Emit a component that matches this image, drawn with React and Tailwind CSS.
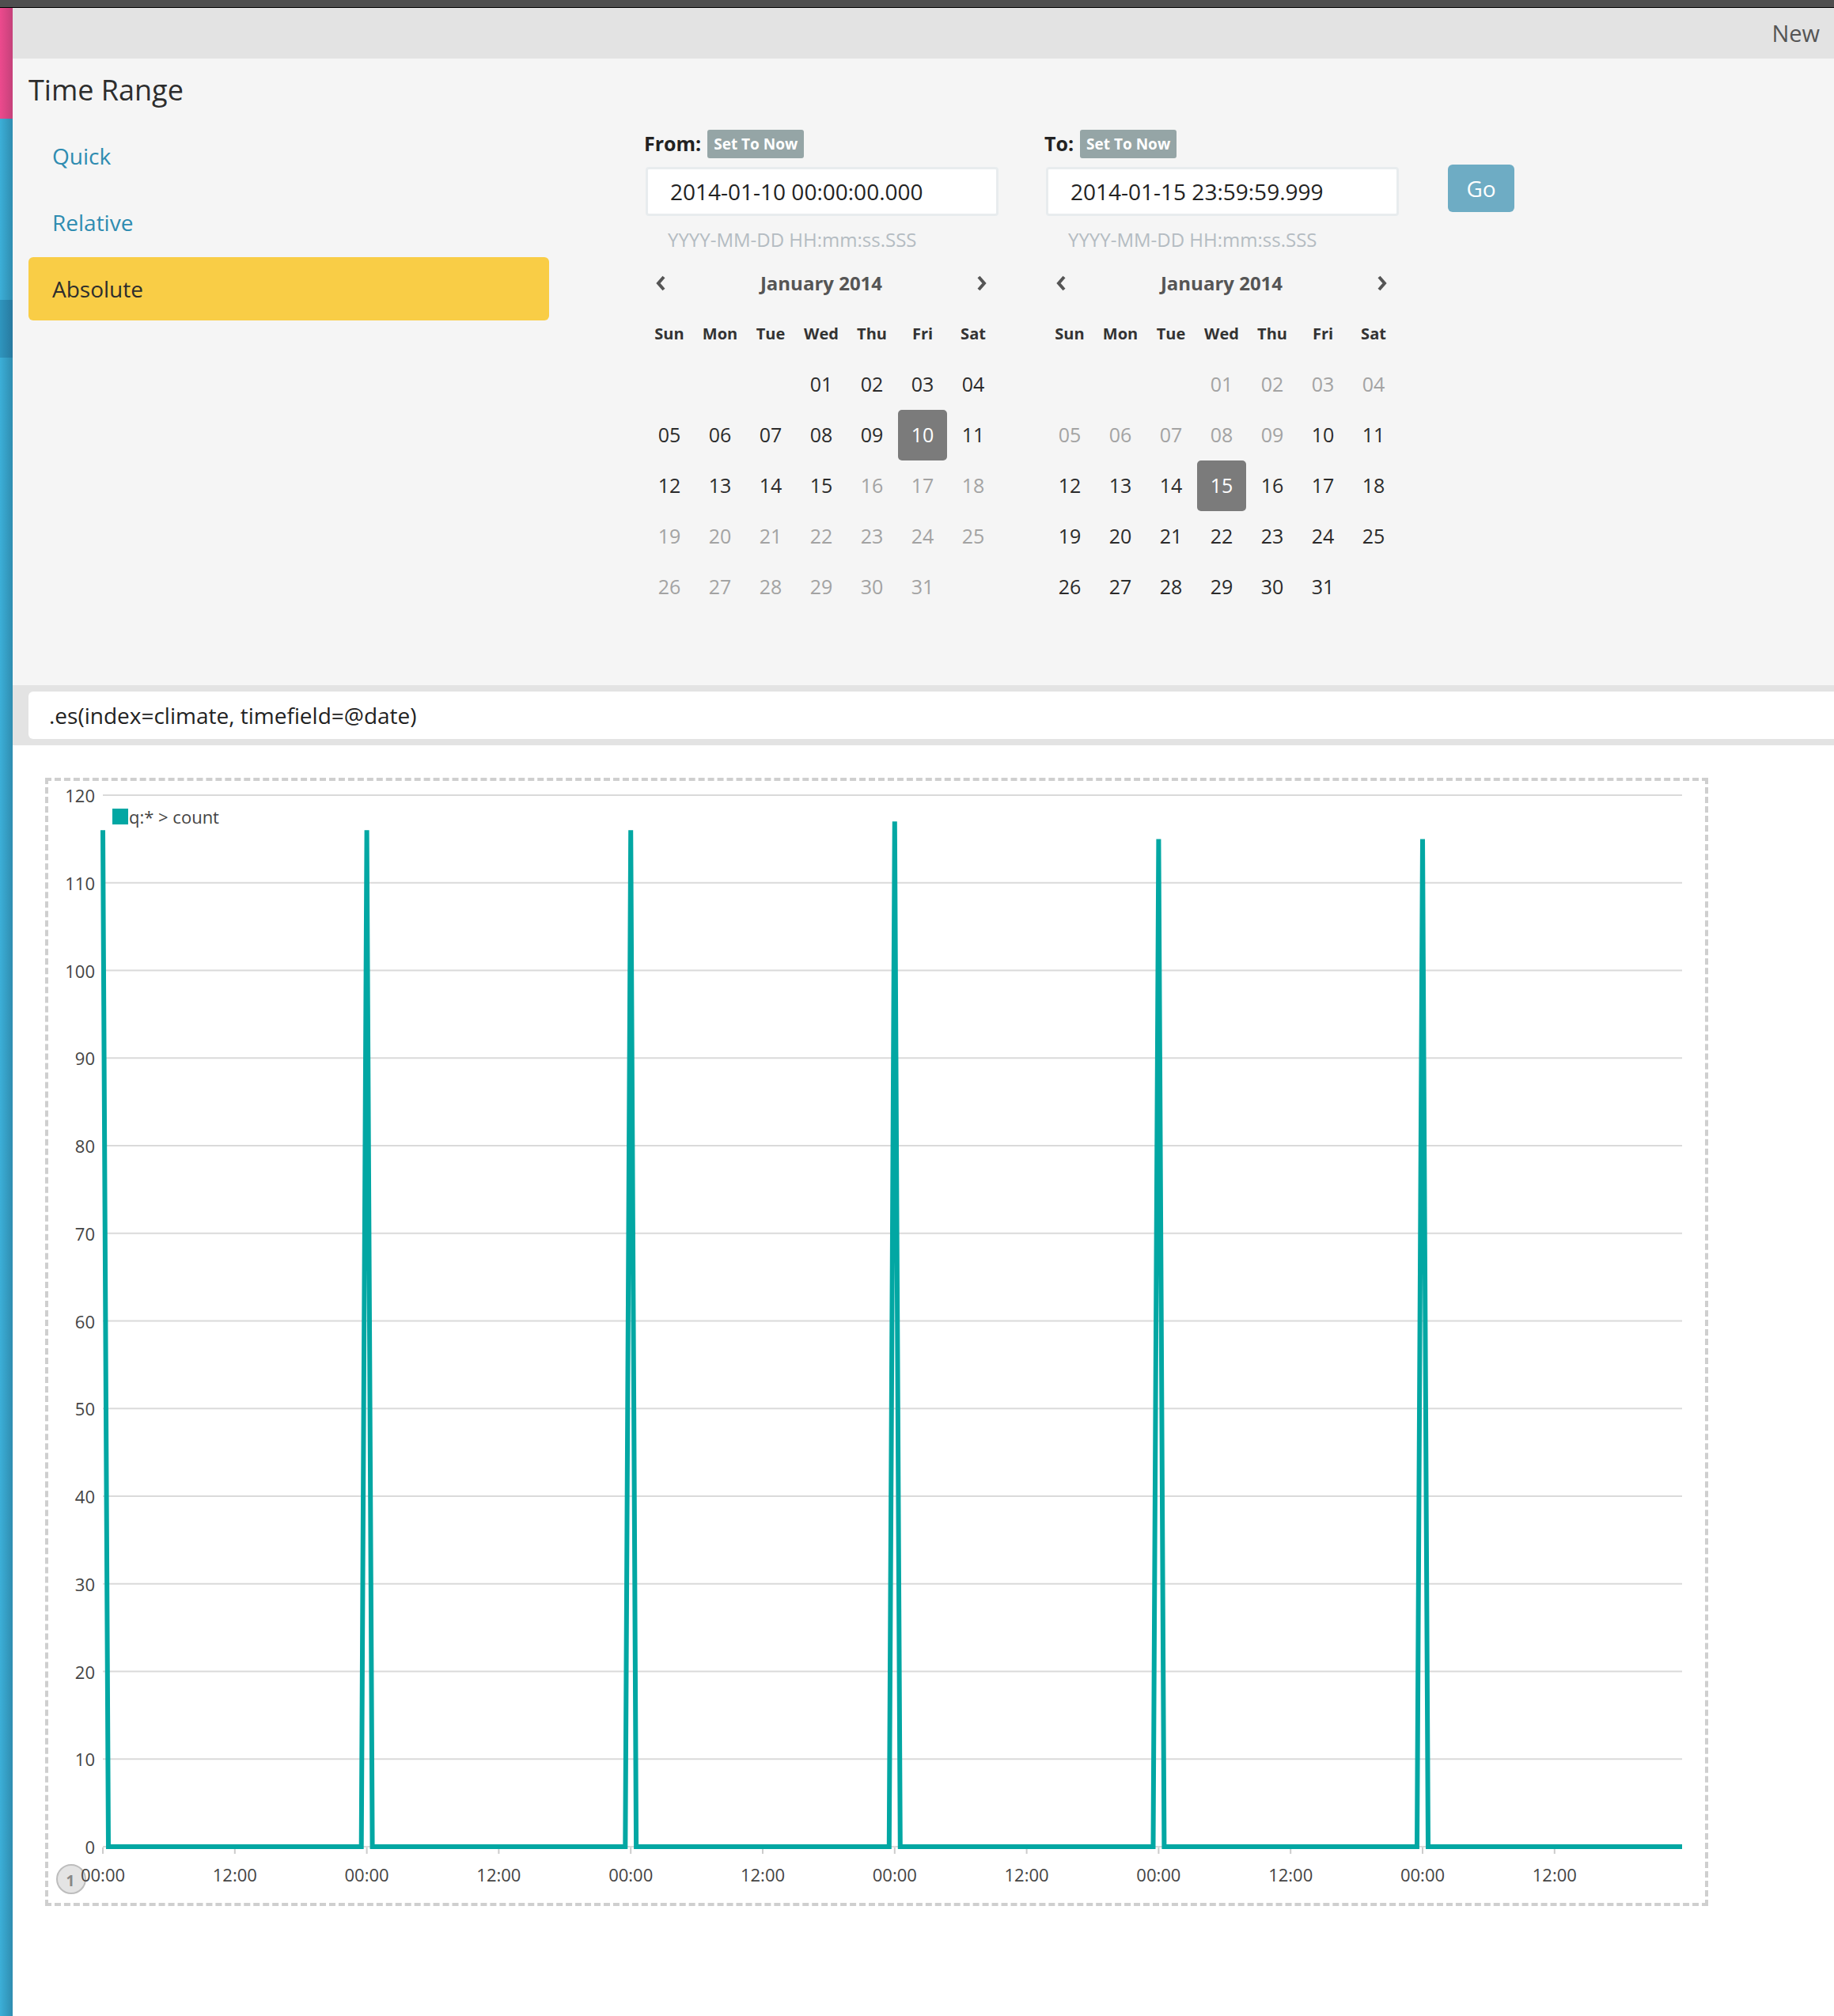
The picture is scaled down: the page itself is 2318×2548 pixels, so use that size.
import React from 'react';

const DAYS = ['Sun', 'Mon', 'Tue', 'Wed', 'Thu', 'Fri', 'Sat'];

// January 2014 starts on a Wednesday
const monthCells = () => {
    const cells = [];
    for (let i = 0; i < 3; i++) cells.push(null);
    for (let d = 1; d <= 31; d++) cells.push(d);
    while (cells.length % 7 !== 0) cells.push(null);
    return cells;
};

const Chevron = ({ dir }) => (
    <svg width="14" height="22" viewBox="0 0 14 22">
        <polyline
            points={dir === 'left' ? '11,3 4,11 11,19' : '3,3 10,11 3,19'}
            fill="none"
            stroke="#555"
            strokeWidth="4"
            strokeLinejoin="miter"
        />
    </svg>
);

const Calendar = ({ selected, isMuted }) => (
    <div className="w-[448px]">
        <div className="h-[64px] flex items-center justify-between px-[14px]">
            <Chevron dir="left" />
            <span className="text-[24px] font-bold text-[#555]">January 2014</span>
            <Chevron dir="right" />
        </div>
        <div className="grid grid-cols-7">
            {DAYS.map((d) => (
                <div key={d} className="h-[64px] flex items-center justify-center text-[20px] font-bold text-[#333]">
                    {d}
                </div>
            ))}
            {monthCells().map((d, i) => (
                <div key={i} className="h-[64px] flex items-center justify-center">
                    {d && (
                        <span
                            className={`w-[62px] h-[64px] flex items-center justify-center rounded-[5px] text-[25px] ${d === selected
                                ? 'bg-[#7b7b7b] text-white'
                                : isMuted(d)
                                    ? 'text-[#a3a3a3]'
                                    : 'text-[#2b2b2b]'
                                }`}
                        >
                            {String(d).padStart(2, '0')}
                        </span>
                    )}
                </div>
            ))}
        </div>
    </div>
);

const DateColumn = ({ label, value, selected, isMuted }) => (
    <div className="w-[448px] pt-[7px]">
        <div className="h-[36px] flex items-center gap-[8px]">
            <span className="text-[25px] font-bold text-[#222]">{label}</span>
            <span className="h-[36px] px-[8px] flex items-center rounded-[3px] bg-[#95a5a6] text-white text-[19px] font-bold">
                Set To Now
            </span>
        </div>
        <div className="mt-[11px] ml-[2px] h-[62px] border-[3px] border-[#e8ecee] rounded-[4px] bg-white flex items-center pl-[28px] text-[28px] text-[#222]">
            {value}
        </div>
        <div className="mt-[7px] h-[46px] leading-[46px] pl-[30px] text-[24px] text-[#b4bcc2]">
            YYYY-MM-DD HH:mm:ss.SSS
        </div>
        <Calendar selected={selected} isMuted={isMuted} />
    </div>
);

const Chart = () => {
    const x0 = 69;
    const x1 = 2065;
    const pxH = 13.9;
    const y = (v) => 1347 - v * (1329 / 120);
    const X = (h) => x0 + h * pxH;
    const peaks = [116, 116, 116, 117, 115, 115];

    const pts = [[X(0), y(peaks[0])], [X(0.5), y(0)]];
    for (let d = 1; d < 6; d++) {
        pts.push([X(24 * d - 0.5), y(0)]);
        pts.push([X(24 * d), y(peaks[d])]);
        pts.push([X(24 * d + 0.5), y(0)]);
    }
    pts.push([x1, y(0)]);
    const path = pts.map((p, i) => `${i ? 'L' : 'M'}${p[0].toFixed(1)},${p[1].toFixed(1)}`).join(' ');

    const grid = [];
    for (let v = 0; v <= 120; v += 10) grid.push(v);
    const ticks = [];
    for (let k = 0; k < 12; k++) ticks.push(k);

    return (
        <svg width="2094" height="1418" viewBox="0 0 2094 1418" className="block">
            {grid.map((v) => (
                <g key={v}>
                    <line x1={x0} x2={x1} y1={y(v)} y2={y(v)} stroke="#dadada" strokeWidth="2" />
                    <text x="59" y={y(v)} textAnchor="end" dominantBaseline="central" fontSize="22" fill="#444">
                        {v}
                    </text>
                </g>
            ))}
            {ticks.map((k) => (
                <line key={k} x1={X(k * 12)} x2={X(k * 12)} y1="1348" y2="1356" stroke="#ccc" strokeWidth="2" />
            ))}
            <circle cx="29" cy="1388" r="18" fill="#e4e4e4" stroke="#bdbdbd" strokeWidth="2" />
            <text x="28" y="1390" textAnchor="middle" dominantBaseline="central" fontSize="19" fontWeight="bold" fill="#888">
                1
            </text>
            {ticks.map((k) => (
                <text key={k} x={X(k * 12)} y="1382" textAnchor="middle" dominantBaseline="central" fontSize="22" fill="#444">
                    {k % 2 === 0 ? '00:00' : '12:00'}
                </text>
            ))}
            <path d={path} fill="none" stroke="#02a7a3" strokeWidth="6" strokeLinejoin="miter" />
            <rect x="81" y="35" width="20" height="20" fill="#02a7a3" />
            <text x="102" y="45" dominantBaseline="central" fontSize="22" fill="#444">
                q:* &gt; count
            </text>
        </svg>
    );
};

const App = () => {
    return (
        <div className="min-h-[2548px] w-full flex flex-col bg-white font-['Open_Sans',sans-serif]">
            <div className="h-[10px] bg-[#4f4f4f] border-b border-black" />
            <div className="flex flex-1">
                <aside className="w-[16px] flex flex-col shrink-0">
                    <div className="h-[140px] bg-gradient-to-r from-[#ec4a8d] to-[#c5417a]" />
                    <div className="h-[229px] bg-gradient-to-r from-[#3cafd8] to-[#2f8db0]" />
                    <div className="h-[73px] bg-gradient-to-r from-[#2f95be] to-[#27799f]" />
                    <div className="flex-1 bg-gradient-to-r from-[#3cafd8] to-[#2f8db0]" />
                </aside>
                <main className="flex-1 flex flex-col min-w-0">
                    <header className="h-[64px] bg-[#e3e3e3] flex items-center justify-end pr-[18px]">
                        <span className="text-[29px] text-[#555]">New</span>
                    </header>

                    <section className="h-[792px] bg-[#f5f5f5] pl-[20px] pt-[20px]">
                        <h2 className="h-[40px] leading-[40px] text-[36px] text-[#2d2d2d]">Time Range</h2>
                        <div className="mt-[23px] flex">
                            <nav className="w-[658px] flex flex-col gap-[4px] shrink-0">
                                <a className="h-[80px] flex items-center pl-[30px] rounded-[6px] text-[28px] text-[#2e8cb1]">Quick</a>
                                <a className="h-[80px] flex items-center pl-[30px] rounded-[6px] text-[28px] text-[#2e8cb1]">Relative</a>
                                <a className="h-[80px] flex items-center pl-[30px] rounded-[6px] text-[28px] text-[#2d2d2d] bg-[#f9cd46]">Absolute</a>
                            </nav>
                            <div className="ml-[120px]">
                                <DateColumn label="From:" value="2014-01-10 00:00:00.000" selected={10} isMuted={(d) => d > 15} />
                            </div>
                            <div className="ml-[58px]">
                                <DateColumn label="To:" value="2014-01-15 23:59:59.999" selected={15} isMuted={(d) => d < 10} />
                            </div>
                            <div className="ml-[62px] mt-[51px]">
                                <button className="w-[84px] h-[60px] rounded-[6px] bg-[#6eacc4] text-white text-[28px]">Go</button>
                            </div>
                        </div>
                    </section>

                    <div className="bg-[#e3e3e3] py-[8px] pl-[20px]">
                        <div className="h-[60px] bg-white rounded-l-[6px] flex items-center pl-[26px] text-[28px] text-[#222]">
                            .es(index=climate, timefield=@date)
                        </div>
                    </div>

                    <div className="pt-[41px] pl-[41px]">
                        <div className="w-[2102px] h-[1426px] border-4 border-dashed border-[#cfcfcf]">
                            <Chart />
                        </div>
                    </div>
                </main>
            </div>
        </div>
    );
};

export default App;
